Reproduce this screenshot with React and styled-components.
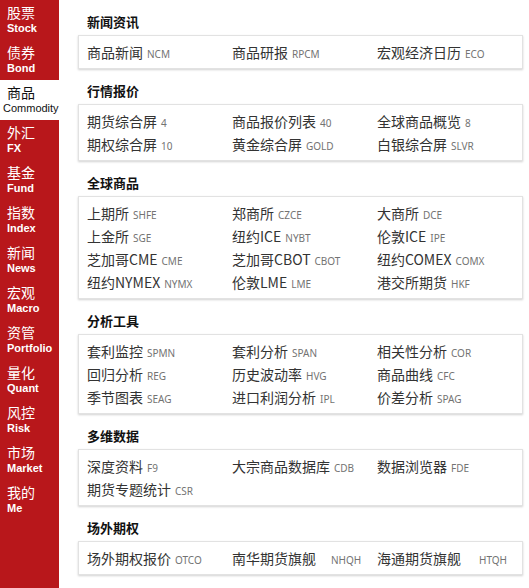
import React from 'react';
import styled, { createGlobalStyle } from 'styled-components';

const RED = '#b8171b';
const FONT = '"Noto Sans", "Noto Sans CJK SC", sans-serif';

const GlobalStyle = createGlobalStyle`
  html, body {
    margin: 0;
    padding: 0;
    background: #fff;
  }
  body {
    font-family: ${FONT};
  }
`;

const Page = styled.div`
  display: flex;
  min-height: 100vh;
`;

const Sidebar = styled.nav`
  width: 59px;
  flex-shrink: 0;
  background: ${RED};
  display: flex;
  flex-direction: column;
`;

const NavItem = styled.div`
  height: 40px;
  padding: 3px 0 0 7px;
  box-sizing: border-box;
  display: flex;
  flex-direction: column;
  background: ${(p) => (p.active ? '#fff' : 'transparent')};
  color: ${(p) => (p.active ? '#111' : '#fff')};
`;

const NavCn = styled.span`
  font-family: "Noto Sans CJK SC", sans-serif;
  font-size: 14px;
  line-height: 18px;
`;

const NavEn = styled.span`
  font-family: "Liberation Sans", Arial, sans-serif;
  font-size: 11px;
  line-height: 13px;
  margin-top: 1px;
  font-weight: ${(p) => (p.active ? 400 : 700)};
  margin-left: ${(p) => (p.active ? '-4px' : '0')};
  white-space: nowrap;
`;

const Main = styled.main`
  flex: 1;
  padding: 12px 13px 0 19px;
`;

const Section = styled.section`
  margin-bottom: 12px;
`;

const Title = styled.h2`
  margin: 0 0 3px;
  padding-left: 9px;
  font-family: "Noto Sans CJK SC", sans-serif;
  font-size: 13px;
  line-height: 20px;
  font-weight: 700;
  color: #111;
`;

const Card = styled.div`
  border: 1px solid #e2e2e2;
  box-shadow: 0 1px 2px rgba(0, 0, 0, 0.18);
  padding: 4.5px 0 4.5px 8px;
  display: grid;
  grid-template-columns: repeat(3, 145px);
  grid-auto-rows: 23px;
`;

const Item = styled.div`
  display: flex;
  align-items: baseline;
  white-space: nowrap;
  line-height: 23px;
`;

const Name = styled.span`
  font-family: "Noto Sans CJK SC", sans-serif;
  font-size: 14px;
  color: #333;
`;

const Code = styled.span`
  font-size: 10px;
  color: #737373;
  margin-left: ${(p) => p.gap || 4}px;
`;

const NAV = [
  ['股票', 'Stock'],
  ['债券', 'Bond'],
  ['商品', 'Commodity'],
  ['外汇', 'FX'],
  ['基金', 'Fund'],
  ['指数', 'Index'],
  ['新闻', 'News'],
  ['宏观', 'Macro'],
  ['资管', 'Portfolio'],
  ['量化', 'Quant'],
  ['风控', 'Risk'],
  ['市场', 'Market'],
  ['我的', 'Me'],
];

const SECTIONS = [
  {
    title: '新闻资讯',
    items: [
      ['商品新闻', 'NCM'],
      ['商品研报', 'RPCM'],
      ['宏观经济日历', 'ECO'],
    ],
  },
  {
    title: '行情报价',
    items: [
      ['期货综合屏', '4'],
      ['商品报价列表', '40'],
      ['全球商品概览', '8'],
      ['期权综合屏', '10'],
      ['黄金综合屏', 'GOLD'],
      ['白银综合屏', 'SLVR'],
    ],
  },
  {
    title: '全球商品',
    items: [
      ['上期所', 'SHFE'],
      ['郑商所', 'CZCE'],
      ['大商所', 'DCE'],
      ['上金所', 'SGE'],
      ['纽约ICE', 'NYBT'],
      ['伦敦ICE', 'IPE'],
      ['芝加哥CME', 'CME'],
      ['芝加哥CBOT', 'CBOT'],
      ['纽约COMEX', 'COMX'],
      ['纽约NYMEX', 'NYMX'],
      ['伦敦LME', 'LME'],
      ['港交所期货', 'HKF'],
    ],
  },
  {
    title: '分析工具',
    items: [
      ['套利监控', 'SPMN'],
      ['套利分析', 'SPAN'],
      ['相关性分析', 'COR'],
      ['回归分析', 'REG'],
      ['历史波动率', 'HVG'],
      ['商品曲线', 'CFC'],
      ['季节图表', 'SEAG'],
      ['进口利润分析', 'IPL'],
      ['价差分析', 'SPAG'],
    ],
  },
  {
    title: '多维数据',
    items: [
      ['深度资料', 'F9'],
      ['大宗商品数据库', 'CDB'],
      ['数据浏览器', 'FDE'],
      ['期货专题统计', 'CSR'],
    ],
  },
  {
    title: '场外期权',
    items: [
      ['场外期权报价', 'OTCO'],
      ['南华期货旗舰', 'NHQH', 15],
      ['海通期货旗舰', 'HTQH', 18],
    ],
  },
];

export default function App() {
  return (
    <>
      <GlobalStyle />
      <Page>
        <Sidebar>
          {NAV.map(([cn, en]) => {
            const active = cn === '商品';
            return (
              <NavItem key={cn} active={active}>
                <NavCn>{cn}</NavCn>
                <NavEn active={active}>{en}</NavEn>
              </NavItem>
            );
          })}
        </Sidebar>
        <Main>
          {SECTIONS.map((s) => (
            <Section key={s.title}>
              <Title>{s.title}</Title>
              <Card>
                {s.items.map(([name, code, gap]) => (
                  <Item key={name}>
                    <Name>{name}</Name>
                    <Code gap={gap}>{code}</Code>
                  </Item>
                ))}
              </Card>
            </Section>
          ))}
        </Main>
      </Page>
    </>
  );
}
